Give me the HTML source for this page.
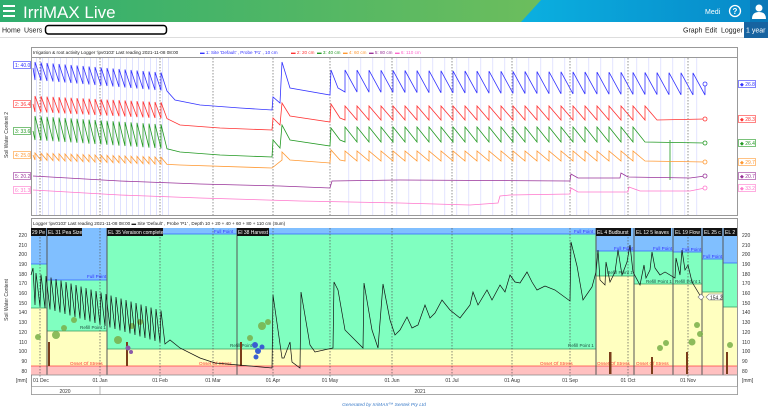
<!DOCTYPE html>
<html><head><meta charset="utf-8"><style>
html,body{margin:0;padding:0;width:768px;height:410px;overflow:hidden;background:#fff;font-family:"Liberation Sans",sans-serif}
svg{display:block}
</style></head><body>
<svg width="768" height="410" viewBox="0 0 768 410" xmlns="http://www.w3.org/2000/svg" font-family="Liberation Sans, sans-serif">
<defs>
<linearGradient id="hg" x1="0" x2="1"><stop offset="0" stop-color="#2fae6f"/><stop offset="1" stop-color="#86c455"/></linearGradient>
<linearGradient id="hb" x1="0" x2="1"><stop offset="0" stop-color="#0bb0e0"/><stop offset="1" stop-color="#0788c8"/></linearGradient>
<pattern id="irr1" width="6" height="10" patternUnits="userSpaceOnUse"><rect x="0" y="0" width="1" height="10" fill="#dfe2ff"/></pattern>
<pattern id="irr2" width="12" height="10" patternUnits="userSpaceOnUse"><rect x="0" y="0" width="1.2" height="10" fill="#e2e4ff"/></pattern>
</defs>
<rect x="0" y="0" width="768" height="22" fill="url(#hg)"/>
<polygon points="541,0 768,0 768,22 521,22" fill="url(#hb)"/>
<rect x="750" y="0" width="18" height="22" fill="#0a78b8"/>
<rect x="3" y="5" width="12" height="2" fill="#fff"/><rect x="3" y="10" width="12" height="2" fill="#fff"/><rect x="3" y="15" width="12" height="2" fill="#fff"/>
<text x="23" y="18" font-size="17" fill="#fff">IrriMAX Live</text>
<text x="705" y="14" font-size="7" fill="#fff">Medi</text>
<circle cx="735" cy="11" r="5.5" fill="none" stroke="#fff" stroke-width="1.3"/>
<text x="735" y="14" font-size="8" fill="#fff" text-anchor="middle" font-weight="bold">?</text>
<circle cx="759" cy="8" r="3.5" fill="#fff"/><path d="M752,19 q0,-7 7,-7 q7,0 7,7 z" fill="#fff"/>
<rect x="0" y="22" width="768" height="15" fill="#fff"/>
<rect x="0" y="37" width="768" height="1" fill="#ddd"/>
<text x="2" y="32.5" font-size="7" fill="#222">Home</text>
<text x="24" y="32.5" font-size="7" fill="#222">Users</text>
<rect x="45.5" y="25.5" width="121" height="8.5" rx="3" fill="#fff" stroke="#000" stroke-width="1.5"/>
<text x="683" y="32.5" font-size="7" fill="#222">Graph</text>
<text x="705" y="32.5" font-size="7" fill="#222">Edit</text>
<text x="721" y="32.5" font-size="7" fill="#222">Logger</text>
<rect x="744" y="22" width="24" height="16" fill="#1763a0"/>
<text x="746" y="32.5" font-size="7" fill="#fff">1 year</text>

<rect x="31.5" y="47.5" width="706" height="168" fill="#fff" stroke="#999"/>
<line x1="31" y1="57.5" x2="738" y2="57.5" stroke="#999"/>
<text x="33" y="54" font-size="4.6" fill="#222">Irrigation &amp; root activity    Logger 'ipv0103'    Last reading 2021-11-08 08:00</text>
<text x="200" y="54" font-size="4.6" fill="#33f">▬ 1: Site 'Default' , Probe 'P1' , 10 cm</text>
<text x="291" y="54" font-size="4.6" fill="#f33">▬ 2: 20 cm</text>
<text x="317" y="54" font-size="4.6" fill="#292">▬ 3: 40 cm</text>
<text x="343" y="54" font-size="4.6" fill="#f93">▬ 4: 60 cm</text>
<text x="369" y="54" font-size="4.6" fill="#939">▬ 5: 80 cm</text>
<text x="395" y="54" font-size="4.6" fill="#f6c">▬ 6: 110 cm</text>
<rect x="35" y="58" width="135" height="157" fill="url(#irr1)"/>
<rect x="345" y="58" width="360" height="157" fill="url(#irr2)" opacity="0.8"/>
<g stroke="#666" stroke-dasharray="1.5,1.5" stroke-width="0.7">
<line x1="40" y1="58" x2="40" y2="215"/><line x1="100" y1="58" x2="100" y2="215"/><line x1="160" y1="58" x2="160" y2="215"/><line x1="213" y1="58" x2="213" y2="215"/><line x1="273" y1="58" x2="273" y2="215"/><line x1="330" y1="58" x2="330" y2="215"/><line x1="392" y1="58" x2="392" y2="215"/><line x1="452" y1="58" x2="452" y2="215"/><line x1="512" y1="58" x2="512" y2="215"/><line x1="570" y1="58" x2="570" y2="215"/><line x1="628" y1="58" x2="628" y2="215"/><line x1="688" y1="58" x2="688" y2="215"/>
</g>
<g fill="none" stroke-width="0.8">
<path stroke="#33f" d="M33,68 L35,80 l0,-18 6,18.5 0,-18 6,18.5 0,-18 6,18.5 0,-18 6,18.5 0,-18 6,18.5 0,-18 6,18.5 0,-18 6,18.5 0,-18 6,18.5 0,-18 6,18.5 0,-18 6,18.5 0,-18 6,18.5 0,-18 6,18.5 0,-18 6,18.5 0,-18 6,18.5 0,-18 6,18.5 0,-18 6,18.5 0,-18 6,18.5 0,-18 6,18.5 0,-18 6,18.5 0,-18 6,18.5 0,-18 6,18.5 0,-18 6,18.5 L175,100 200,105 240,108 272,110 273,97 280,103 282,62 290,88 330,95 331,70 338,88 345,92 l0,-22 12,22.1 0,-22 12,22.1 0,-22 12,22.1 0,-22 12,22.1 0,-22 12,22.1 0,-22 12,22.1 0,-22 12,22.1 0,-22 12,22.1 0,-22 12,22.1 0,-22 12,22.1 0,-22 12,22.1 0,-22 12,22.1 0,-22 12,22.1 0,-22 12,22.1 0,-22 12,22.1 0,-22 12,22.1 0,-22 12,22.1 0,-22 12,22.1 0,-22 12,22.1 0,-22 12,22.1 0,-22 12,22.1 0,-22 12,22.1 0,-22 12,22.1 0,-22 12,22.1 0,-22 12,22.1 0,-22 12,22.1 0,-22 12,22.1 0,-22 12,22.1 0,-22 12,22.1 0,-22 12,22.1 L705,84"/>
<path stroke="#f33" d="M33,104 L35,112 l0,-16 6,16.3 0,-16 6,16.3 0,-16 6,16.3 0,-16 6,16.3 0,-16 6,16.3 0,-16 6,16.3 0,-16 6,16.3 0,-16 6,16.3 0,-16 6,16.3 0,-16 6,16.3 0,-16 6,16.3 0,-16 6,16.3 0,-16 6,16.3 0,-16 6,16.3 0,-16 6,16.3 0,-16 6,16.3 0,-16 6,16.3 0,-16 6,16.3 0,-16 6,16.3 0,-16 6,16.3 0,-16 6,16.3 0,-16 6,16.3 L180,125 220,128 272,130 273,118 280,125 282,103 290,116 330,122 331,104 340,118 345,120 l0,-14 12,14 0,-14 12,14 0,-14 12,14 0,-14 12,14 0,-14 12,14 0,-14 12,14 0,-14 12,14 0,-14 12,14 0,-14 12,14 0,-14 12,14 0,-14 12,14 0,-14 12,14 0,-14 12,14 0,-14 12,14 0,-14 12,14 0,-14 12,14 0,-14 12,14 0,-14 12,14 0,-14 12,14 0,-14 12,14 0,-14 12,14 0,-14 12,14 0,-14 12,14 0,-14 12,14 0,-14 12,14 0,-14 12,14 L705,119"/>
<path stroke="#292" d="M33,131 L35,140 l0,-24 6,24.4 0,-24 6,24.4 0,-24 6,24.4 0,-24 6,24.4 0,-24 6,24.4 0,-24 6,24.4 0,-24 6,24.4 0,-24 6,24.4 0,-24 6,24.4 0,-24 6,24.4 0,-24 6,24.4 0,-24 6,24.4 0,-24 6,24.4 0,-24 6,24.4 0,-24 6,24.4 0,-24 6,24.4 0,-24 6,24.4 0,-24 6,24.4 0,-24 6,24.4 0,-24 6,24.4 0,-24 6,24.4 0,-24 6,24.4 L180,152 220,155 272,157 273,140 280,148 282,125 290,140 330,146 331,128 340,140 345,142 l0,-15 12,15 0,-15 12,15 0,-15 12,15 0,-15 12,15 0,-15 12,15 0,-15 12,15 0,-15 12,15 0,-15 12,15 0,-15 12,15 0,-15 12,15 0,-15 12,15 0,-15 12,15 0,-15 12,15 0,-15 12,15 0,-15 12,15 0,-15 12,15 0,-15 12,15 0,-15 12,15 0,-15 12,15 0,-15 12,15 0,-15 12,15 0,-15 12,15 0,-15 12,15 0,-15 12,15 0,-15 12,15 L705,143 M670,140 L670,180"/>
<path stroke="#f93" d="M33,155 L35,160 l0,-7 6,7.2 0,-7 6,7.2 0,-7 6,7.2 0,-7 6,7.2 0,-7 6,7.2 0,-7 6,7.2 0,-7 6,7.2 0,-7 6,7.2 0,-7 6,7.2 0,-7 6,7.2 0,-7 6,7.2 0,-7 6,7.2 0,-7 6,7.2 0,-7 6,7.2 0,-7 6,7.2 0,-7 6,7.2 0,-7 6,7.2 0,-7 6,7.2 0,-7 6,7.2 0,-7 6,7.2 0,-7 6,7.2 0,-7 6,7.2 L180,165 272,168 282,160 282,152 290,160 330,163 331,150 340,160 345,161 l0,-10 12,10 0,-10 12,10 0,-10 12,10 0,-10 12,10 0,-10 12,10 0,-10 12,10 0,-10 12,10 0,-10 12,10 0,-10 12,10 0,-10 12,10 0,-10 12,10 0,-10 12,10 0,-10 12,10 0,-10 12,10 0,-10 12,10 0,-10 12,10 0,-10 12,10 0,-10 12,10 0,-10 12,10 0,-10 12,10 0,-10 12,10 0,-10 12,10 0,-10 12,10 0,-10 12,10 0,-10 12,10 L705,162"/>
<path stroke="#939" d="M33,176 L120,181 200,184 280,186 330,188 332,181 400,180 L570,181 571,174 578,178 620,178 621,173 628,177 690,178 705,176"/>
<path stroke="#f7c" d="M33,190 L120,195 200,198 300,201 400,203 470,205 498,203 500,196 510,195 570,194 571,188 578,192 628,192 629,187 640,191 690,191 705,188"/>
</g>
<g fill="#fff" stroke-width="0.8"><circle cx="705" cy="84" r="2" stroke="#33f"/><circle cx="705" cy="119" r="2" stroke="#f33"/><circle cx="705" cy="143" r="2" stroke="#292"/><circle cx="705" cy="162" r="2" stroke="#f93"/><circle cx="705" cy="176" r="2" stroke="#939"/><circle cx="705" cy="188" r="2" stroke="#f7c"/></g>
<g font-size="5" stroke-width="0.6">
<rect x="13.5" y="61.5" width="17" height="7" fill="#fff" stroke="#33f"/><text x="15" y="67" fill="#33f">1: 40.0</text>
<rect x="13.5" y="100.5" width="17" height="7" fill="#fff" stroke="#f33"/><text x="15" y="106" fill="#f33">2: 36.4</text>
<rect x="13.5" y="127.5" width="17" height="7" fill="#fff" stroke="#292"/><text x="15" y="133" fill="#292">3: 33.6</text>
<rect x="13.5" y="151.5" width="17" height="7" fill="#fff" stroke="#f93"/><text x="15" y="157" fill="#f93">4: 25.0</text>
<rect x="13.5" y="172.5" width="17" height="7" fill="#fff" stroke="#939"/><text x="15" y="178" fill="#939">5: 20.2</text>
<rect x="13.5" y="186.5" width="17" height="7" fill="#fff" stroke="#f7c"/><text x="15" y="192" fill="#f7c">6: 31.3</text>
<rect x="738.5" y="80.5" width="17" height="7" fill="#fff" stroke="#33f"/><text x="740" y="86" fill="#33f">◆ 26.8</text>
<rect x="738.5" y="115.5" width="17" height="7" fill="#fff" stroke="#f33"/><text x="740" y="121" fill="#f33">◆ 28.3</text>
<rect x="738.5" y="139.5" width="17" height="7" fill="#fff" stroke="#292"/><text x="740" y="145" fill="#292">◆ 26.4</text>
<rect x="738.5" y="158.5" width="17" height="7" fill="#fff" stroke="#f93"/><text x="740" y="164" fill="#f93">◆ 29.7</text>
<rect x="738.5" y="172.5" width="17" height="7" fill="#fff" stroke="#939"/><text x="740" y="178" fill="#939">◆ 20.7</text>
<rect x="738.5" y="184.5" width="17" height="7" fill="#fff" stroke="#f7c"/><text x="740" y="190" fill="#f7c">◆ 33.2</text>
</g>
<text transform="translate(8,135) rotate(-90)" font-size="5" fill="#333" text-anchor="middle">Soil Water Content 2</text>

<rect x="31.5" y="218.5" width="706" height="176" fill="#fff" stroke="#999"/>
<text x="33" y="225" font-size="4.6" fill="#222">Logger 'ipv0103'    Last reading 2021-11-08 08:00    ▬ Site 'Default' , Probe 'P1' , Depth 10 + 20 + 40 + 60 + 80 + 110 cm (Sum)</text>
<g>
<rect x="31" y="366" width="706" height="9" fill="#ffc0c0"/>
<rect x="31" y="228" width="16" height="36" fill="#80bfff"/><rect x="31" y="264" width="16" height="44" fill="#80ffc0"/><rect x="31" y="308" width="16" height="58" fill="#ffffc0"/>
<rect x="47" y="228" width="60" height="52" fill="#80bfff"/><rect x="47" y="280" width="60" height="51" fill="#80ffc0"/><rect x="47" y="331" width="60" height="35" fill="#ffffc0"/>
<rect x="107" y="228" width="489" height="6" fill="#80bfff"/><rect x="107" y="234" width="489" height="115" fill="#80ffc0"/><rect x="107" y="349" width="489" height="17" fill="#ffffc0"/>
<rect x="596" y="228" width="38" height="23" fill="#80bfff"/><rect x="596" y="251" width="38" height="25" fill="#80ffc0"/><rect x="596" y="276" width="38" height="90" fill="#ffffc0"/>
<rect x="634" y="228" width="39" height="23" fill="#80bfff"/><rect x="634" y="251" width="39" height="33" fill="#80ffc0"/><rect x="634" y="284" width="39" height="82" fill="#ffffc0"/>
<rect x="673" y="228" width="29" height="24" fill="#80bfff"/><rect x="673" y="252" width="29" height="32" fill="#80ffc0"/><rect x="673" y="284" width="29" height="82" fill="#ffffc0"/>
<rect x="702" y="228" width="21" height="31" fill="#80bfff"/><rect x="702" y="259" width="21" height="33" fill="#80ffc0"/><rect x="702" y="292" width="21" height="74" fill="#ffffc0"/>
<rect x="723" y="228" width="14" height="35" fill="#80bfff"/><rect x="723" y="263" width="14" height="44" fill="#80ffc0"/><rect x="723" y="307" width="14" height="59" fill="#ffffc0"/>
</g>
<g stroke-width="0.8" fill="none">
<path stroke="#3366ff" d="M31,264H47 M47,280H107 M107,234H596 M596,251H673 M673,252H702 M702,259H723 M723,263H737"/>
<path stroke="#3a9a60" d="M31,308H47 M47,331H107 M107,349H596 M596,276H634 M634,284H702 M702,292H723 M723,307H737"/>
<path stroke="#ff4040" d="M31,366H737"/>
</g>
<g stroke="#555" stroke-width="1"><line x1="47" y1="228" x2="47" y2="375"/><line x1="107" y1="228" x2="107" y2="375"/><line x1="237" y1="228" x2="237" y2="375"/><line x1="596" y1="228" x2="596" y2="375"/><line x1="634" y1="228" x2="634" y2="375"/><line x1="673" y1="228" x2="673" y2="375"/><line x1="702" y1="228" x2="702" y2="375"/><line x1="723" y1="228" x2="723" y2="375"/></g>
<g stroke="#555" stroke-dasharray="1.5,1.5" stroke-width="0.7">
<line x1="40" y1="228" x2="40" y2="378"/><line x1="100" y1="228" x2="100" y2="378"/><line x1="160" y1="228" x2="160" y2="378"/><line x1="213" y1="228" x2="213" y2="378"/><line x1="273" y1="228" x2="273" y2="378"/><line x1="330" y1="228" x2="330" y2="378"/><line x1="392" y1="228" x2="392" y2="378"/><line x1="452" y1="228" x2="452" y2="378"/><line x1="512" y1="228" x2="512" y2="378"/><line x1="570" y1="228" x2="570" y2="378"/><line x1="628" y1="228" x2="628" y2="378"/><line x1="688" y1="228" x2="688" y2="378"/>
</g>
<g font-size="5" fill="#fff">
<rect x="31" y="228" width="15" height="8" fill="#111"/><text x="32" y="234">29 Pe</text>
<rect x="47" y="228" width="35" height="8" fill="#111"/><text x="48" y="234">EL 31 Pea Size</text>
<rect x="107" y="228" width="56" height="8" fill="#111"/><text x="108" y="234">EL 35 Veraison complete</text>
<rect x="237" y="228" width="32" height="8" fill="#111"/><text x="238" y="234">El 38 Harvest</text>
<rect x="596" y="228" width="35" height="8" fill="#111"/><text x="597" y="234">EL 4 Budburst</text>
<rect x="635" y="228" width="36" height="8" fill="#111"/><text x="636" y="234">EL 12 5 leaves</text>
<rect x="674" y="228" width="27" height="8" fill="#111"/><text x="675" y="234">EL 19 Flow</text>
<rect x="703" y="228" width="19" height="8" fill="#111"/><text x="704" y="234">EL 25 c</text>
<rect x="724" y="228" width="13" height="8" fill="#111"/><text x="725" y="234">EL 2</text>
</g>
<g font-size="4.6">
<text x="87" y="278" fill="#33f">Full Point</text><text x="574" y="233" fill="#33f">Full Point</text><text x="214" y="233" fill="#33f">Full Point</text>
<text x="614" y="250" fill="#33f">Full Point</text><text x="653" y="250" fill="#33f">Full Point</text><text x="682" y="251" fill="#33f">Full Point</text><text x="703" y="258" fill="#33f">Full Point</text>
<text x="80" y="329" fill="#254">Refill Point 1</text><text x="230" y="347" fill="#254">Refill Point 1</text><text x="568" y="347" fill="#254">Refill Point 1</text>
<text x="607" y="274" fill="#254">Refill Point 1</text><text x="646" y="283" fill="#254">Refill Point 1</text><text x="675" y="283" fill="#254">Refill Point 1</text>
<text x="70" y="365" fill="#f33">Onset Of Stress</text><text x="199" y="365" fill="#f33">Onset Of Stress</text><text x="540" y="365" fill="#f33">Onset Of Stress</text>
<text x="597" y="365" fill="#f33">Onset Of Stress</text><text x="636" y="365" fill="#f33">Onset Of Stress</text>
</g>
<g>
<rect x="48" y="342" width="2" height="24" fill="#7a3d1a"/><rect x="126" y="342" width="2" height="24" fill="#7a3d1a"/><rect x="240" y="342" width="2" height="24" fill="#7a3d1a"/><rect x="609" y="352" width="2.5" height="22" fill="#7a3d1a"/><rect x="651" y="357" width="2" height="17" fill="#7a3d1a"/><rect x="686" y="352" width="2" height="22" fill="#7a3d1a"/><rect x="726" y="352" width="2" height="22" fill="#7a3d1a"/>
<g fill="#7ab04a" opacity="0.85"><circle cx="38" cy="337" r="3"/><circle cx="56" cy="335" r="4"/><circle cx="64" cy="328" r="3"/><circle cx="74" cy="320" r="3"/><circle cx="118" cy="340" r="4"/><circle cx="132" cy="326" r="3"/><circle cx="140" cy="322" r="3"/><circle cx="250" cy="338" r="3"/><circle cx="262" cy="326" r="4"/><circle cx="268" cy="322" r="3"/><circle cx="660" cy="348" r="3"/><circle cx="666" cy="343" r="3"/><circle cx="692" cy="342" r="3.5"/><circle cx="700" cy="334" r="3"/><circle cx="697" cy="325" r="3"/><circle cx="730" cy="345" r="3"/></g>
<g fill="#8a5aa8"><circle cx="128" cy="348" r="2.5"/><circle cx="131" cy="352" r="2"/></g>
<g fill="#3a5fd0"><circle cx="255" cy="345" r="3"/><circle cx="258" cy="351" r="3"/><circle cx="256" cy="357" r="2.5"/><circle cx="262" cy="347" r="2.5"/></g>
</g>
<path fill="none" stroke="#111" stroke-width="0.7" d="M31,275 L33,268 35,305 l1,-32 4,33.5 1,-32 4,33.5 1,-32 4,33.5 1,-32 4,33.5 1,-32 4,33.5 1,-32 4,33.5 1,-32 4,33.5 1,-32 4,33.5 1,-32 4,33.5 1,-32 4,33.5 1,-32 4,33.5 1,-32 4,33.5 1,-32 4,33.5 1,-32 4,33.5 1,-32 4,33.5 1,-32 4,33.5 1,-32 4,33.5 1,-32 4,33.5 1,-32 4,33.5 1,-32 4,33.5 1,-32 4,33.5 1,-32 4,33.5 1,-32 4,33.5 1,-32 4,33.5 1,-32 4,33.5 1,-32 4,33.5 L170,340 180,348 200,358 215,363 250,366 272,368 273,295 282,358 284,358 290,342 292,362 300,368 301,292 310,345 315,352 333,348 334,282 338,290 345,330 363,348 364,283 372,330 378,348 383,284 390,320 395,335 400,330 407,317 412,328 418,325 425,305 430,318 435,313 442,300 450,310 460,318 470,305 473,292 478,305 487,290 492,300 500,285 505,292 510,275 515,282 520,283 527,272 532,282 537,290 545,286 555,290 570,301 571,242 577,266 583,300 592,287 596,272 598,250 600,280 605,285 606,262 610,282 615,272 618,250 622,275 627,262 630,245 633,272 640,285 644,265 646,278 650,270 652,252 655,268 660,275 665,272 675,278 676,258 680,275 682,250 685,270 688,265 692,282 701,297"/>
<path d="M701,294 l3,3 -3,3 -3,-3z" fill="#fff" stroke="#777" stroke-width="0.6"/>
<path d="M706,297 l3,-3 h13 v6 h-13z" fill="#fff" stroke="#777" stroke-width="0.6"/>
<text x="710" y="299.5" font-size="5" fill="#222">154.2</text>
<g font-size="5" fill="#333">
<text x="27" y="237" text-anchor="end">220</text><text x="27" y="247" text-anchor="end">210</text><text x="27" y="256" text-anchor="end">200</text><text x="27" y="266" text-anchor="end">190</text><text x="27" y="276" text-anchor="end">180</text><text x="27" y="285" text-anchor="end">170</text><text x="27" y="295" text-anchor="end">160</text><text x="27" y="305" text-anchor="end">150</text><text x="27" y="314" text-anchor="end">140</text><text x="27" y="324" text-anchor="end">130</text><text x="27" y="334" text-anchor="end">120</text><text x="27" y="344" text-anchor="end">110</text><text x="27" y="353" text-anchor="end">100</text><text x="27" y="363" text-anchor="end">90</text><text x="27" y="373" text-anchor="end">80</text>
<text x="742" y="237">220</text><text x="742" y="247">210</text><text x="742" y="256">200</text><text x="742" y="266">190</text><text x="742" y="276">180</text><text x="742" y="285">170</text><text x="742" y="295">160</text><text x="742" y="305">150</text><text x="742" y="314">140</text><text x="742" y="324">130</text><text x="742" y="334">120</text><text x="742" y="344">110</text><text x="742" y="353">100</text><text x="742" y="363">90</text><text x="742" y="373">80</text>
<text x="16" y="382">[mm]</text><text x="742" y="382">[mm]</text>
<text x="33" y="382">01 Dec</text><text x="100" y="382" text-anchor="middle">01 Jan</text><text x="160" y="382" text-anchor="middle">01 Feb</text><text x="213" y="382" text-anchor="middle">01 Mar</text><text x="273" y="382" text-anchor="middle">01 Apr</text><text x="330" y="382" text-anchor="middle">01 May</text><text x="392" y="382" text-anchor="middle">01 Jun</text><text x="452" y="382" text-anchor="middle">01 Jul</text><text x="512" y="382" text-anchor="middle">01 Aug</text><text x="570" y="382" text-anchor="middle">01 Sep</text><text x="628" y="382" text-anchor="middle">01 Oct</text><text x="688" y="382" text-anchor="middle">01 Nov</text>
</g>
<line x1="31" y1="375" x2="737" y2="375" stroke="#888" stroke-width="0.7"/>
<rect x="31.5" y="386.5" width="706" height="8" fill="#fff" stroke="#999" stroke-width="0.7"/>
<line x1="100" y1="386" x2="100" y2="395" stroke="#999" stroke-width="0.7"/>
<text x="65" y="393" font-size="5" fill="#333" text-anchor="middle">2020</text>
<text x="420" y="393" font-size="5" fill="#333" text-anchor="middle">2021</text>
<text transform="translate(8,300) rotate(-90)" font-size="5" fill="#333" text-anchor="middle">Soil Water Content</text>
<text x="384" y="406" font-size="4.8" fill="#3a7bc8" font-style="italic" text-anchor="middle">Generated by IrriMAX™ Sentek Pty Ltd</text>
</svg>
</body></html>
